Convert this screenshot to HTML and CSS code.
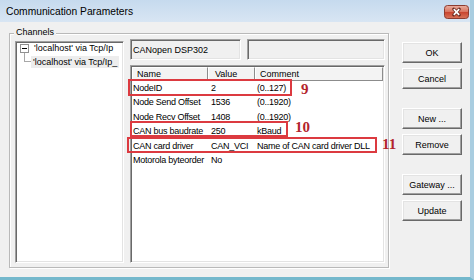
FILE: index.html
```html
<!DOCTYPE html>
<html>
<head>
<meta charset="utf-8">
<link rel="stylesheet" href="styles.css">
</head>
<body>
<div class="window">
  <div class="titlebar">
    <span class="title">Communication Parameters</span>
    <svg class="close" viewBox="0 0 25 14" width="25" height="14">
      <defs>
        <linearGradient id="cg" x1="0" y1="0" x2="0" y2="1">
          <stop offset="0" stop-color="#eab0a2"/>
          <stop offset="0.48" stop-color="#d9745f"/>
          <stop offset="0.52" stop-color="#c9442f"/>
          <stop offset="1" stop-color="#d8745a"/>
        </linearGradient>
      </defs>
      <rect x="0.5" y="0.5" width="24" height="13" rx="3" fill="url(#cg)" stroke="#8d3c30"/>
      <path d="M9.8 4.2 L15.2 9.8 M15.2 4.2 L9.8 9.8" stroke="#6a2a20" stroke-width="3.2" stroke-linecap="round"/>
      <path d="M9.8 4.2 L15.2 9.8 M15.2 4.2 L9.8 9.8" stroke="#ffffff" stroke-width="1.7"/>
    </svg>
  </div>
  <div class="client">
    <div class="group">
      <span class="legend">Channels</span>
      <div class="tree sunken">
        <div class="tnode">
          <span class="minus"></span>
          <span class="tlabel">'localhost' via Tcp/Ip</span>
        </div>
        <div class="tnode">
          <span class="elbow"></span>
          <span class="tlabel sel">'localhost' via Tcp/Ip_</span>
        </div>
      </div>
      <div class="panel">
        <div class="fields">
          <div class="field f1 sunken">CANopen DSP302</div>
          <div class="field f2 sunken"></div>
        </div>
        <div class="list sunken">
          <div class="head">
            <span class="hc hname">Name</span>
            <span class="hc hvalue">Value</span>
            <span class="hc hcomment">Comment</span>
          </div>
          <div class="row"><span>NodeID</span><span class="v">2</span><span class="c">(0..127)</span></div>
          <div class="row"><span>Node Send Offset</span><span class="v">1536</span><span class="c">(0..1920)</span></div>
          <div class="row"><span>Node Recv Offset</span><span class="v">1408</span><span class="c">(0..1920)</span></div>
          <div class="row"><span>CAN bus baudrate</span><span class="v">250</span><span class="c">kBaud</span></div>
          <div class="row"><span>CAN card driver</span><span class="v">CAN_VCI</span><span class="c">Name of CAN card driver DLL</span></div>
          <div class="row"><span>Motorola byteorder</span><span class="v">No</span><span class="c"></span></div>
        </div>
      </div>
    </div>
    <div class="buttons">
      <button class="btn">OK</button>
      <button class="btn">Cancel</button>
      <button class="btn gap">New ...</button>
      <button class="btn">Remove</button>
      <button class="btn gap">Gateway ...</button>
      <button class="btn">Update</button>
    </div>
  </div>

  <div class="mark m9"></div>
  <div class="mark m10"></div>
  <div class="mark m11"></div>
  <span class="num n9">9</span>
  <span class="num n10">10</span>
  <span class="num n11">11</span>
</div>
</body>
</html>
```

FILE: styles.css
```css
* { box-sizing: border-box; }
html, body { margin: 0; padding: 0; }
body {
  width: 474px;
  height: 280px;
  overflow: hidden;
  font-family: "Liberation Sans", Arial, sans-serif;
  font-size: 9px;
  color: #000;
  background: #f0f0f0;
}
.window {
  position: relative;
  width: 474px;
  height: 280px;
  display: flex;
  flex-direction: column;
  background: #f0f0f0;
  border-right: 4px solid #a9cde0;
  border-bottom: 3px solid #74b8cc;
}
.titlebar {
  flex: none;
  height: 22px;
  display: flex;
  align-items: center;
  padding-left: 6px;
  background: linear-gradient(#c6daee, #d8e5f3);
}
.title {
  font-size: 10.25px;
  margin-top: 1px;
  color: #000;
}
.close {
  display: block;
  margin-left: auto;
  margin-right: 1px;
  margin-top: 1px;
}
.client {
  flex: 1;
  display: flex;
  align-items: flex-start;
  padding: 11px 0 0 9px;
}
.group {
  position: relative;
  width: 380px;
  height: 235px;
  border: 1px solid #b9b9b9;
  box-shadow: inset 1px 1px #fff, 1px 1px #fff;
  padding: 5px 3px 4px 5px;
  display: flex;
  gap: 6px;
}
.legend {
  position: absolute;
  left: 4px;
  top: -8px;
  padding: 0 2px;
  line-height: 12px;
  background: #f0f0f0;
}
.sunken {
  border: 1px solid;
  border-color: #a0a0a0 #fff #fff #a0a0a0;
  box-shadow: inset 1px 1px #696969, inset -1px -1px #e3e3e3;
}
.tree {
  width: 109px;
  margin-top: 2px;
  background: #fff;
  padding-top: 0;
}
.tnode {
  display: flex;
  align-items: center;
  height: 14px;
  white-space: nowrap;
}
.tnode:first-child { margin-top: -1px; }
.minus {
  position: relative;
  margin-left: 4px;
  width: 9px;
  height: 9px;
  border: 1px solid #919191;
  background: #fff;
}
.minus::after {
  content: "";
  position: absolute;
  left: 1px;
  top: 3px;
  width: 5px;
  height: 1px;
  background: #000;
}
.tlabel { margin-left: 4px; padding: 0 1px; line-height: 12px; }
.elbow {
  align-self: flex-start;
  margin-left: 8px;
  margin-top: -2px;
  width: 7px;
  height: 9px;
  border-left: 1px solid #a8a8a8;
  border-bottom: 1px solid #a8a8a8;
}
.tnode .sel { margin-left: 0; padding: 0 2px; background: #ededed; }
.panel {
  flex: 1;
  display: flex;
  flex-direction: column;
  gap: 5px;
}
.fields {
  display: flex;
  gap: 6px;
  height: 21px;
  margin-top: 0;
}
.field {
  background: #f0f0f0;
  display: flex;
  align-items: center;
  padding-left: 2px;
  white-space: nowrap;
}
.f1 { width: 111px; }
.f2 { flex: 1; }
.list {
  flex: 1;
  background: #fff;
  padding: 1px;
}
.head {
  display: flex;
  height: 14px;
}
.hc {
  border: 1px solid;
  border-color: #fff #8c8c8c #8c8c8c #fff;
  background: #f3f3f3;
  line-height: 12px;
  padding-left: 4px;
  white-space: nowrap;
}
.hname { width: 76px; }
.hvalue { width: 47px; padding-left: 6px; }
.hcomment { width: 128px; }
.row {
  display: grid;
  grid-template-columns: 76px 47px 1fr;
  height: 14.4px;
  line-height: 14.4px;
  white-space: nowrap;
  font-size: 9px;
  letter-spacing: -0.25px;
}
.row span { padding-left: 1px; }
.row .v { padding-left: 3px; }
.row .c { padding-left: 2px; }
.buttons {
  display: flex;
  flex-direction: column;
  width: 60px;
  margin: 9px 0 0 13px;
}
.btn {
  height: 21px;
  margin: 0;
  padding: 0;
  font: inherit;
  color: #000;
  background: #f0f0f0;
  border: 1px solid;
  border-color: #fff #696969 #696969 #fff;
  box-shadow: inset -1px -1px #a0a0a0, inset 1px 1px #e3e3e3;
}
.btn + .btn { margin-top: 5px; }
.btn.gap { margin-top: 19px; }
.mark {
  position: absolute;
  border: 2px solid #dc3a40;
}
.m9 { left: 128px; top: 79px; width: 164px; height: 17px; }
.m10 { left: 130px; top: 121px; width: 158px; height: 16px; }
.m11 { left: 127px; top: 137px; width: 250px; height: 16px; }
.num {
  position: absolute;
  font-family: "Liberation Serif", serif;
  font-weight: bold;
  font-size: 15px;
  line-height: 15px;
  color: #b3242c;
}
.n9 { left: 301px; top: 82px; }
.n10 { left: 295px; top: 120px; }
.n11 { left: 382px; top: 137px; }
```
